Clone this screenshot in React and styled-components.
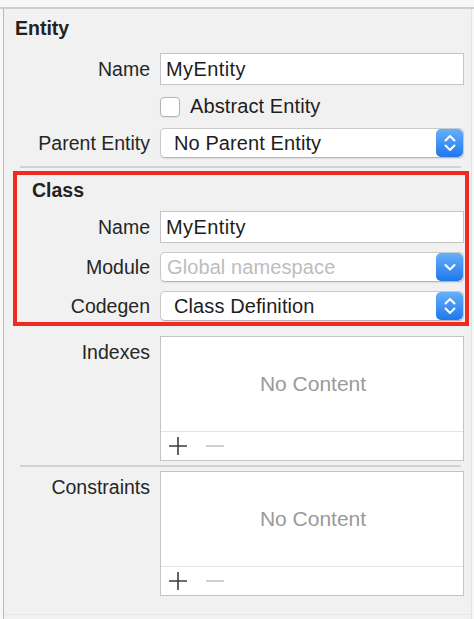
import React from 'react'
import styled, { createGlobalStyle } from 'styled-components'

const GlobalStyle = createGlobalStyle`
    html, body {
        margin: 0;
        padding: 0;
        background: #f1f1f1;
    }
    body {
        font-family: "Liberation Sans", Arial, sans-serif;
        color: #262626;
    }
`

const Page = styled.div`
    width: 474px;
    height: 619px;
    display: flex;
    flex-direction: column;
    background: #f7f7f7;
    overflow: hidden;
`

const TopStrip = styled.div`
    height: 7px;
    flex-shrink: 0;
    background: #f7f7f7;
    border-bottom: 2px solid #cdcdcd;
`

const Panel = styled.div`
    flex: 1;
    margin-left: 3px;
    margin-right: 2px;
    border-left: 1px solid #b9b9b9;
    border-right: 1px solid #e2e2e2;
    background: #f1f1f1;
    display: flex;
    flex-direction: column;
    padding-bottom: 4px;
`

const Section = styled.section`
    display: flex;
    flex-direction: column;
    gap: ${({ gap }) => gap || 11}px;
`

const Header = styled.h3`
    margin: 0;
    padding-left: ${({ indent }) => indent}px;
    font-size: 19.5px;
    font-weight: bold;
    line-height: 22px;
    color: #222;
`

const Row = styled.div`
    display: grid;
    grid-template-columns: ${({ labelWidth }) => labelWidth}px 304px;
    column-gap: 10px;
    align-items: ${({ top }) => (top ? 'start' : 'center')};
`

const Label = styled.label`
    text-align: right;
    font-size: 19.5px;
    line-height: 22px;
    color: #262626;
    white-space: nowrap;
    padding-top: ${({ top }) => (top ? 5 : 0)}px;
`

const TextField = styled.div`
    height: 32px;
    box-sizing: border-box;
    background: #fff;
    border: 1.5px solid #c3c3c3;
    padding-left: 5px;
    display: flex;
    align-items: center;
    font-size: 20px;
    letter-spacing: 0.4px;
    color: #1d1d1d;
`

const Popup = styled.div`
    height: 30px;
    box-sizing: border-box;
    background: #fff;
    border: 1px solid #c9c9c9;
    border-bottom-color: #b5b5b5;
    border-radius: 5px;
    display: flex;
    align-items: stretch;
    overflow: hidden;
    box-shadow: 0 1px 1px rgba(0, 0, 0, 0.08);
`

const PopupText = styled.span`
    flex: 1;
    display: flex;
    align-items: center;
    padding-left: ${({ placeholder }) => (placeholder ? 6 : 13)}px;
    font-size: 20px;
    letter-spacing: 0.1px;
    color: ${({ placeholder }) => (placeholder ? '#bdbdbd' : '#1d1d1d')};
`

const Stepper = styled.span`
    width: 27px;
    display: flex;
    align-items: center;
    justify-content: center;
    border-radius: 5px;
    background: linear-gradient(#65b0fb, #1f77ec);
`

const CheckRow = styled.div`
    display: flex;
    align-items: center;
    gap: 10px;
    height: 21px;
`

const Checkbox = styled.span`
    width: 20px;
    height: 20px;
    box-sizing: border-box;
    background: #fff;
    border: 1px solid #b3b3b3;
    border-radius: 4px;
    box-shadow: 0 1px 1px rgba(0, 0, 0, 0.06);
`

const CheckText = styled.span`
    font-size: 20px;
    letter-spacing: 0.1px;
    color: #1d1d1d;
`

const Separator = styled.hr`
    margin: ${({ top }) => top}px 10px 0 16px;
    border: none;
    border-top: 2px solid #d2d2d2;
    height: 0;
`

const Highlight = styled.div`
    margin: 3px 2px 0 9px;
    border: 4px solid #ee2a22;
    padding: 4px 0 1px 0;
    display: flex;
    flex-direction: column;
    gap: 9px;
`

const ListBox = styled.div`
    height: 125px;
    box-sizing: border-box;
    background: #fff;
    border: 1.5px solid #c3c3c3;
    display: flex;
    flex-direction: column;
`

const ListContent = styled.div`
    flex: 1;
    display: flex;
    align-items: center;
    justify-content: center;
    font-size: 21px;
    color: #9a9a9a;
    padding-left: 2px;
`

const ListToolbar = styled.div`
    height: 28px;
    border-top: 1px solid #e3e3e3;
    display: flex;
    align-items: center;
    gap: 17px;
    padding-left: 7px;
`

const ToolIcon = styled.svg`
    width: 20px;
    height: 20px;
    display: block;
`

const ListSection = styled.div`
    margin-top: ${({ top }) => top}px;
`

const Footer = styled.div`
    flex: 1;
    margin-top: 17px;
    background: #f1f1f1;
    border-bottom: 1px solid #e6e6e6;
`

const Chevrons = ({ single }) => (
    <svg width="14" height="22" viewBox="0 0 14 22">
        {single ? (
            <path d="M2.5 9 L7 13.5 L11.5 9" fill="none" stroke="#fff" strokeWidth="2" strokeLinecap="round" strokeLinejoin="round" />
        ) : (
            <>
                <path d="M2.5 8.5 L7 4 L11.5 8.5" fill="none" stroke="#fff" strokeWidth="2" strokeLinecap="round" strokeLinejoin="round" />
                <path d="M2.5 13.5 L7 18 L11.5 13.5" fill="none" stroke="#fff" strokeWidth="2" strokeLinecap="round" strokeLinejoin="round" />
            </>
        )}
    </svg>
)

const PopupField = ({ value, placeholder, single }) => (
    <Popup>
        <PopupText placeholder={placeholder ? 1 : 0}>{value}</PopupText>
        <Stepper>
            <Chevrons single={single} />
        </Stepper>
    </Popup>
)

const ListField = () => (
    <ListBox>
        <ListContent>No Content</ListContent>
        <ListToolbar>
            <ToolIcon viewBox="0 0 20 20">
                <path d="M10 1 V19 M1 10 H19" stroke="#3c3c3c" strokeWidth="1.6" />
            </ToolIcon>
            <ToolIcon viewBox="0 0 20 20">
                <path d="M1 10 H19" stroke="#c4c4c4" strokeWidth="1.6" />
            </ToolIcon>
        </ListToolbar>
    </ListBox>
)

const App = () => {
    return (
        <>
            <GlobalStyle />
            <Page>
                <TopStrip />
                <Panel>
                    <Section gap={11} style={{ marginTop: 8 }}>
                        <Header indent={11} style={{ marginBottom: 3 }}>Entity</Header>
                        <Row labelWidth={146}>
                            <Label>Name</Label>
                            <TextField>MyEntity</TextField>
                        </Row>
                        <Row labelWidth={146}>
                            <span />
                            <CheckRow>
                                <Checkbox />
                                <CheckText>Abstract Entity</CheckText>
                            </CheckRow>
                        </Row>
                        <Row labelWidth={146}>
                            <Label>Parent Entity</Label>
                            <PopupField value="No Parent Entity" />
                        </Row>
                    </Section>

                    <Separator top={8} />

                    <Highlight>
                        <Header indent={15} style={{ marginBottom: 1 }}>Class</Header>
                        <Row labelWidth={133}>
                            <Label>Name</Label>
                            <TextField>MyEntity</TextField>
                        </Row>
                        <Row labelWidth={133}>
                            <Label>Module</Label>
                            <PopupField value="Global namespace" placeholder single />
                        </Row>
                        <Row labelWidth={133}>
                            <Label>Codegen</Label>
                            <PopupField value="Class Definition" />
                        </Row>
                    </Highlight>

                    <ListSection top={10}>
                        <Row labelWidth={146} top>
                            <Label top>Indexes</Label>
                            <ListField />
                        </Row>
                    </ListSection>

                    <Separator top={4} />

                    <ListSection top={4}>
                        <Row labelWidth={146} top>
                            <Label top>Constraints</Label>
                            <ListField />
                        </Row>
                    </ListSection>

                    <Footer />
                </Panel>
            </Page>
        </>
    )
}

export default App
